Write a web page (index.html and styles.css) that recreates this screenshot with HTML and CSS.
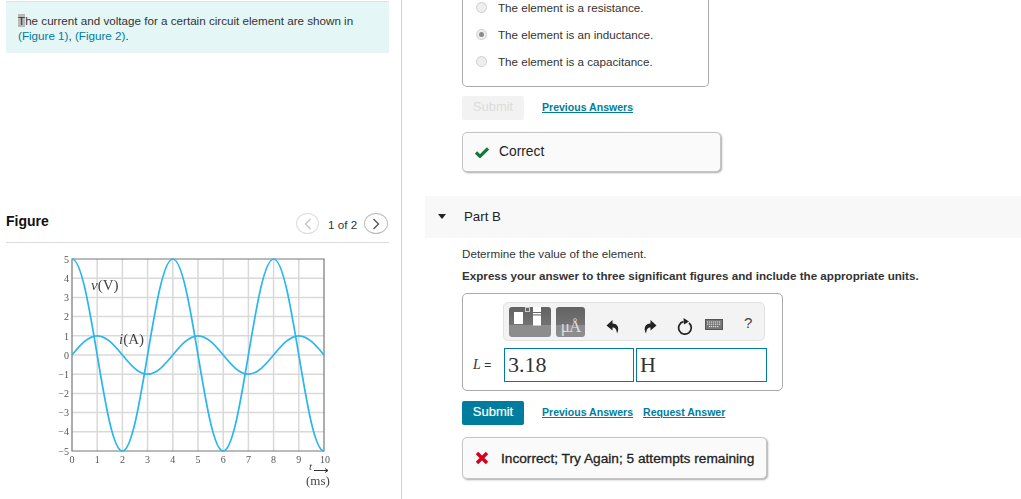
FILE: index.html
```html
<!DOCTYPE html>
<html lang="en">
<head>
<meta charset="utf-8">
<title>Circuit element</title>
<link rel="stylesheet" href="styles.css">
</head>
<body>
<main class="page">
  <section class="left">
    <div class="intro">
      <span class="hl">T</span>he current and voltage for a certain circuit element are shown in<br>
      <a class="plain-link">(Figure 1)</a>, <a class="plain-link">(Figure 2)</a>.
    </div>
    <div class="fig-head">
      <h2 class="fig-title">Figure</h2>
      <div class="pager">
        <span class="pill pill-off"><svg width="8" height="12" viewBox="0 0 8 12"><path d="M6.500 1 1.500 6l5 5" fill="none" stroke="#c4c4c4" stroke-width="1.400"/></svg></span>
        <span class="count">1 of 2</span>
        <span class="pill"><svg width="8" height="12" viewBox="0 0 8 12"><path d="M1.500 1l5 5-5 5" fill="none" stroke="#555" stroke-width="1.400"/></svg></span>
      </div>
    </div>
    <svg class="chart" width="310" height="240" viewBox="0 0 310 240">
      <g transform="translate(42 105)">
        <path class="grid" d="M25.2-96V96M50.4-96V96M75.6-96V96M100.8-96V96M126-96V96M151.2-96V96M176.4-96V96M201.6-96V96M226.8-96V96"/>
        <path class="grid" d="M0-76.8H252M0-57.6H252M0-38.4H252M0-19.2H252M0 0H252M0 19.2H252M0 38.4H252M0 57.6H252M0 76.8H252"/>
        <path class="frame" d="M0-96H252V96H0Z"/>
        <path class="curve" d="M0-96c9.12 0 16.98 46.82 25.2 96c8.22 49.18 16.08 96 25.2 96c9.12 0 16.98-46.82 25.2-96c8.22-49.18 16.08-96 25.2-96c9.12 0 16.98 46.82 25.2 96c8.22 49.18 16.08 96 25.2 96c9.12 0 16.98-46.82 25.2-96c8.22-49.18 16.08-96 25.2-96c9.12 0 16.98 46.82 25.2 96c8.22 49.18 16.08 96 25.2 96"/>
        <path class="curve" d="M0 0c8.22-9.84 16.08-19.2 25.2-19.2c9.12 0 16.98 9.36 25.2 19.2c8.22 9.84 16.08 19.2 25.2 19.2c9.12 0 16.98-9.36 25.2-19.2c8.22-9.84 16.08-19.2 25.2-19.2c9.12 0 16.98 9.36 25.2 19.2c8.22 9.84 16.08 19.2 25.2 19.2c9.12 0 16.98-9.36 25.2-19.2c8.22-9.84 16.08-19.2 25.2-19.2c9.12 0 16.98 9.36 25.2 19.2"/>
        <g class="ticks-y">
          <text x="-3" y="-92.500">5</text><text x="-3" y="-73">4</text><text x="-3" y="-54">3</text><text x="-3" y="-35">2</text><text x="-3" y="-15.500">1</text><text x="-3" y="3.500">0</text><text x="-3" y="23">−1</text><text x="-3" y="42">−2</text><text x="-3" y="61">−3</text><text x="-3" y="80">−4</text><text x="-3" y="99.500">−5</text>
        </g>
        <g class="ticks-x">
          <text x="0" y="108">0</text><text x="25.2" y="108">1</text><text x="50.4" y="108">2</text><text x="75.6" y="108">3</text><text x="100.8" y="108">4</text><text x="126" y="108">5</text><text x="151.2" y="108">6</text><text x="176.4" y="108">7</text><text x="201.6" y="108">8</text><text x="226.8" y="108">9</text><text x="253" y="108">10</text>
        </g>
        <text class="lab" x="19" y="-65"><tspan class="it">v</tspan>(V)</text>
        <text class="lab" x="47" y="-11"><tspan class="it">i</tspan>(A)</text>
        <text class="lab-t" x="237" y="115"><tspan class="it">t</tspan></text>
        <path class="arrow" d="M242 115.500H256M253 113.500l3 2-3 2"/>
        <text class="lab-sm" x="234" y="129.500">(ms)</text>
      </g>
    </svg>
  </section>

  <section class="right">
    <div class="choices">
      <label class="choice"><span class="radio"></span>The element is a resistance.</label>
      <label class="choice"><span class="radio radio-on"></span>The element is an inductance.</label>
      <label class="choice"><span class="radio"></span>The element is a capacitance.</label>
    </div>
    <div class="actions actions-a">
      <button class="btn btn-off">Submit</button>
      <a class="link">Previous Answers</a>
    </div>
    <div class="feedback fb-ok">
      <svg class="fb-icon" width="14" height="11" viewBox="0 0 14 11"><path d="M1 5.500l4 3.800L13 1.400" fill="none" stroke="#12783a" stroke-width="3.200"/></svg>
      <span class="fb-text">Correct</span>
    </div>

    <header class="part"><span class="caret"></span><h3 class="part-title">Part B</h3></header>
    <p class="q">Determine the value of the element.</p>
    <p class="q q-strong">Express your answer to three significant figures and include the appropriate units.</p>

    <div class="answer">
      <div class="toolbar">
        <span class="tpl tpl-wide">
          <svg width="42" height="30" viewBox="0 0 42 30">
            <rect x="5" y="5" width="9" height="12" fill="#fff"/>
            <rect x="16.500" y="0.500" width="4" height="4" fill="none" stroke="#ccc"/>
            <rect x="24" y="0" width="8" height="5" fill="#fff"/>
            <rect x="24" y="6" width="8" height="1.400" fill="#fff"/>
            <rect x="24" y="8.500" width="8" height="10" fill="#fff"/>
          </svg>
        </span>
        <span class="tpl tpl-narrow"><span class="units">μÅ</span></span>
        <svg class="tool t-undo" width="14" height="15" viewBox="0 0 14 15"><path d="M6.500 1 .5 6.500l6 5V8.500c2.500 0 4 1.500 4.500 6C14 9 11.500 4.500 6.500 4.500Z" fill="#222"/></svg>
        <svg class="tool t-redo" width="14" height="15" viewBox="0 0 14 15"><path d="M7.500 1l6 5.500-6 5V8.500c-2.500 0-4 1.500-4.500 6C0 9 2.500 4.500 7.500 4.500Z" fill="#222"/></svg>
        <svg class="tool t-reset" width="16" height="17" viewBox="0 0 16 17"><path d="M6.500 3.700A6.300 6.300 0 1 0 12 5" fill="none" stroke="#222" stroke-width="1.700"/><path d="M6.500 0 12 3.500 7 6.500Z" fill="#222"/></svg>
        <svg class="tool t-keys" width="18" height="11" viewBox="0 0 18 11"><rect x=".5" y=".5" width="17" height="10" fill="#777" stroke="#555"/><path d="M2 3h14M2 5.200h14M4 7.600h10" stroke="#eee" stroke-width="1" stroke-dasharray="1.200 .8"/></svg>
        <span class="help">?</span>
      </div>
      <div class="entry">
        <span class="var"><i class="var-l">L</i> =</span>
        <span class="field">3.18</span>
        <span class="field field-unit">H</span>
      </div>
    </div>

    <div class="actions actions-b">
      <button class="btn">Submit</button>
      <a class="link">Previous Answers</a>
      <a class="link">Request Answer</a>
    </div>
    <div class="feedback fb-bad">
      <svg class="fb-icon" width="14" height="14" viewBox="0 0 14 14"><path d="M2 2l10 10M12 2 2 12" fill="none" stroke="#d6001c" stroke-width="3.400"/></svg>
      <span>Incorrect; Try Again; 5 attempts remaining</span>
    </div>
  </section>
</main>
</body>
</html>
```
FILE: styles.css
```css
* { box-sizing: border-box; }
html, body { margin: 0; height: 100%; overflow: hidden; background: #fff; }
body { font-family: "Liberation Sans", Arial, sans-serif; font-size: 11.65px; color: #333; }
.page { display: flex; height: 499px; width: 1021px; overflow: hidden; }

.left { width: 402px; flex: none; padding-left: 6px; padding-right: 12px; border-right: 1px solid #c6d2dd; }
.intro { margin-top: 1px; height: 52px; padding: 11px 12px 0; line-height: 15px; background: #e5f6f7; border-top: 1px solid #dfe3e4; }
.hl { background: #b9b9b9; }
.plain-link { color: #007c9e; }
.fig-head { display: flex; justify-content: space-between; margin-top: 158px; height: 32px; border-bottom: 1px solid #dcdcdc; }
.fig-title { margin: 0; font-size: 14px; line-height: 20px; font-weight: bold; color: #111; }
.pager { display: flex; align-items: center; height: 21px; margin: 2px 1px 0 0; }
.pill { display: flex; align-items: center; justify-content: center; width: 24px; height: 21px; border: 1px solid #bbb; border-radius: 50%; }
.pill-off { width: 23px; border-color: #dedede; }
.count { width: 28px; margin: 1px 8px 0 9px; color: #333; white-space: nowrap; }
.chart { display: block; margin: 7px 0 0 24px; filter: blur(.35px); }
.grid { fill: none; stroke: #d9d9d9; stroke-width: 1.500; }
.frame { fill: none; stroke: #777; stroke-width: 1.200; }
.curve { fill: none; stroke: #2bb6ee; stroke-width: 1.700; }
.ticks-y text, .ticks-x text { font-family: "Liberation Serif", serif; font-size: 10px; fill: #555; }
.ticks-y text { text-anchor: end; }
.ticks-x text { text-anchor: middle; }
.lab { font-family: "Liberation Serif", serif; font-size: 15px; fill: #444; }
.lab-sm { font-family: "Liberation Serif", serif; font-size: 13px; fill: #444; }
.lab-t { font-family: "Liberation Serif", serif; font-size: 11px; fill: #444; }
.it { font-style: italic; }
.arrow { fill: none; stroke: #333; stroke-width: 1; }

.right { flex: 1; padding-left: 60px; min-width: 0; }
.choices { width: 247px; height: 87px; padding: 1px 13px 0; display: flex; flex-direction: column; gap: 13px; border: 1px solid #aaa; border-top: 0; border-radius: 0 0 5px 5px; }
.choice { display: flex; align-items: center; height: 14px; line-height: 14px; gap: 11px; }
.radio { flex: none; width: 11px; height: 11px; margin-top: -2px; border-radius: 50%; border: 1px solid #d0d0d0; background: #eee; display: flex; align-items: center; justify-content: center; }
.radio-on::after { content: ""; width: 5px; height: 5px; border-radius: 50%; background: #8a8a8a; }
.actions { display: flex; align-items: center; }
.actions-a { margin-top: 9px; }
.actions-b { margin-top: 10px; }
.btn { width: 62px; height: 24px; padding: 0 0 4px; border: 0; border-radius: 2px; background: #007c9e; color: #fff; font: 13px "Liberation Sans", Arial, sans-serif; -webkit-text-stroke: .2px #fff; margin-right: 18px; }
.btn-off { background: #f2f2f2; color: #dcdcdc; -webkit-text-stroke: 0; }
.link { margin: 0 10px 2px 0; font-size: 10.550px; font-weight: bold; color: #007c9e; text-decoration: underline; }
.feedback { display: flex; align-items: center; background: #fafafa; border: 1px solid #c4c4c4; border-radius: 5px; box-shadow: 1px 1px 2px #aaa; color: #222; font-size: 13.800px; }
.fb-ok { margin-top: 12px; width: 259px; height: 40px; padding-left: 12px; gap: 10px; }
.fb-text { margin-bottom: 2px; }
.fb-bad { margin-top: 12px; width: 305px; height: 42px; padding-left: 12px; gap: 12px; font-size: 13.700px; -webkit-text-stroke: .3px #222; }
.fb-icon { flex: none; }

.part { display: flex; align-items: center; margin: 24px 0 0 -37px; height: 42px; background: #f8f8f8; }
.caret { width: 0; height: 0; margin: 0 18px 2px 13px; border-left: 4.500px solid transparent; border-right: 4.500px solid transparent; border-top: 5px solid #222; }
.part-title { margin: 0 0 2px; font-size: 13.300px; font-weight: normal; color: #222; }
.q { margin: 9px 0 0; line-height: 14px; }
.q-strong { margin-top: 8px; font-weight: bold; }

.answer { width: 321px; height: 98px; margin-top: 10px; padding: 8px 15px 0 40px; border: 1px solid #aaa; border-radius: 5px; }
.toolbar { display: flex; align-items: center; height: 39px; width: 262px; padding-left: 5px; background: #f3f3f3; border: 1px solid #e2e2e2; border-radius: 5px; }
.tpl { display: block; height: 30px; border-radius: 3px; background: linear-gradient(#626262, #737373 60%, #8d8d8d 60%, #8d8d8d); flex: none; }
.tpl svg { display: block; }
.tpl-wide { width: 42px; }
.tpl-narrow { width: 29px; margin-left: 5px; display: flex; justify-content: center; align-items: flex-end; }
.units { font: 17px/20px "Liberation Serif", serif; letter-spacing: -1px; color: #ddd; }
.tool { flex: none; }
.t-undo { margin: 9px 0 0 21px; }
.t-redo { margin: 9px 0 0 23px; }
.t-reset { margin: 9px 0 0 20px; }
.t-keys { margin: 6px 0 0 12px; }
.help { margin: 1px 0 0 21px; font-size: 15px; color: #444; }
.entry { display: flex; align-items: center; margin: 7px 0 0 -30px; height: 34px; }
.var { width: 31px; flex: none; font-size: 12px; white-space: nowrap; }
.var-l { font-family: "Liberation Serif", serif; font-size: 14px; }
.field { display: block; flex: none; width: 130px; height: 34px; padding-left: 3px; margin-right: 2px; border: 1px solid #007c9e; font: 22px/32px "Liberation Serif", serif; color: #333; }
.field-unit { width: 131px; margin-right: 0; }
```
